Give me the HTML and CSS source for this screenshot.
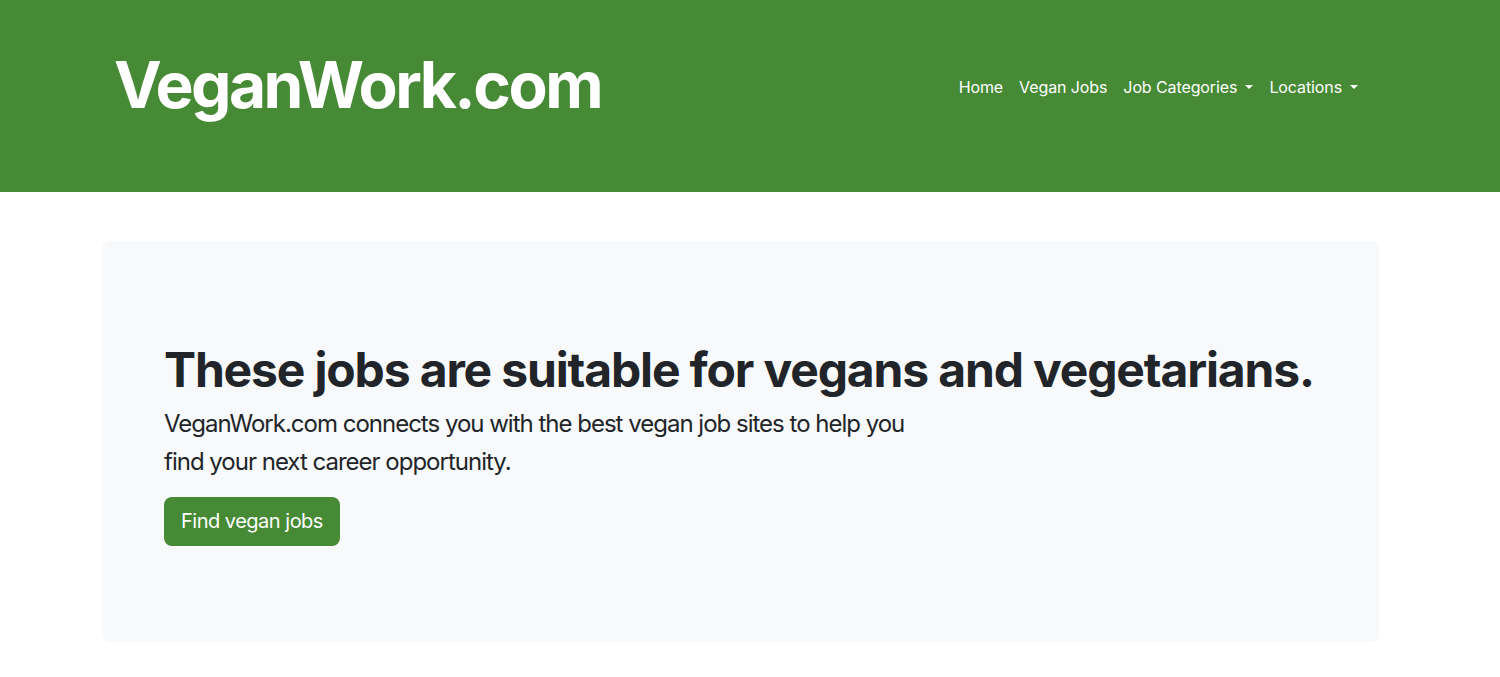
FILE: index.html
```html
<!DOCTYPE html>
<html lang="en">
<head>
<meta charset="utf-8">
<title>VeganWork.com</title>
<link rel="stylesheet" href="styles.css">
</head>
<body>
<header class="site-header">
  <div class="header-inner">
    <a class="brand" href="#">VeganWork.com</a>
    <nav class="nav">
      <a class="nav-link" href="#">Home</a>
      <a class="nav-link" href="#">Vegan Jobs</a>
      <a class="nav-link dropdown" href="#">Job Categories</a>
      <a class="nav-link dropdown" href="#">Locations</a>
    </nav>
  </div>
</header>
<main class="main">
  <section class="jumbo">
    <div class="jumbo-inner">
      <h1 class="jumbo-title">These jobs are suitable for vegans and vegetarians.</h1>
      <p class="jumbo-lead">VeganWork.com connects you with the best vegan job sites to help you find your next career opportunity.</p>
      <a class="btn" href="#">Find vegan jobs</a>
    </div>
  </section>
</main>
</body>
</html>
```

FILE: styles.css
```css
* { box-sizing: border-box; }
html, body { margin: 0; padding: 0; }
body {
  font-family: Inter, "Noto Sans", "Liberation Sans", sans-serif;
  color: #212529;
  background: #fff;
  font-size: 16px;
  line-height: 1.5;
}
a { text-decoration: none; }

.site-header {
  background: #468a35;
  height: 192px;
}
.header-inner {
  display: flex;
  align-items: center;
  justify-content: space-between;
  padding: 38px 134px 0 114px;
  height: 94px;
  box-sizing: content-box;
}
.brand {
  color: #fff;
  font-weight: 700;
  font-size: 64px;
  line-height: 1;
  letter-spacing: -2.5px;
}
.nav {
  display: flex;
  align-items: center;
  padding-top: 4px;
}
.nav-link {
  color: #fff;
  font-size: 16px;
  padding: 8px 8px;
  letter-spacing: -0.1px;
}
.dropdown::after {
  content: "";
  display: inline-block;
  margin-left: 8px;
  vertical-align: 0.255em;
  border-top: 0.3em solid;
  border-right: 0.3em solid transparent;
  border-left: 0.3em solid transparent;
  border-bottom: 0;
}

.main {
  padding: 49px 0 0 102px;
}
.jumbo {
  width: 1277px;
  height: 401px;
  background: #f8f9fa;
  border-radius: 8px;
  padding: 100px 62px 0 62px;
}
.jumbo-title {
  margin: 0 0 6px 0;
  font-size: 48px;
  font-weight: 700;
  line-height: 1.2;
  letter-spacing: -1.15px;
  white-space: nowrap;
}
.jumbo-lead {
  margin: 0 0 16px 0;
  font-size: 24px;
  line-height: 38px;
  max-width: 760px;
  letter-spacing: -1px;
}
.btn {
  display: inline-block;
  background: #468a35;
  color: #fff;
  font-size: 20px;
  line-height: 30px;
  padding: 9px 17px 10px;
  border-radius: 8px;
  letter-spacing: -0.5px;
}
```
